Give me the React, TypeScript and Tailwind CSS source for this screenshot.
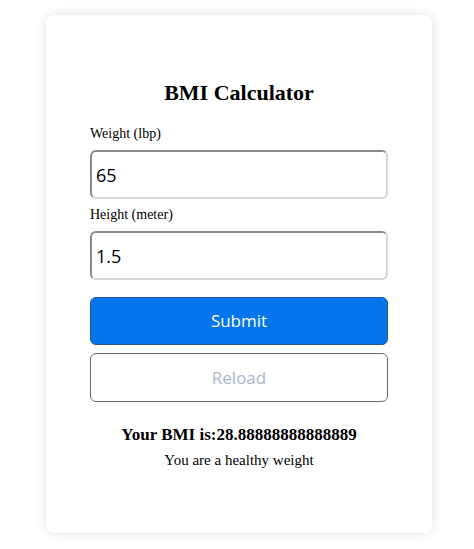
import { useState } from 'react';

const inputClass =
  "mt-[9px] h-[49px] w-full rounded-md border-2 border-t-[#8a8a8a] border-l-[#8a8a8a] border-r-[#d6d6d6] border-b-[#d6d6d6] bg-white pl-[4px] text-[18px] text-black outline-none font-['Open_Sans','DejaVu_Sans',sans-serif]";

export default function App() {
  const [weight, setWeight] = useState('65');
  const [height, setHeight] = useState('1.5');
  const [bmi, setBmi] = useState<number | null>(65 / (1.5 * 1.5));

  const handleSubmit = (e: React.FormEvent) => {
    e.preventDefault();
    const w = parseFloat(weight);
    const h = parseFloat(height);
    if (!w || !h) return;
    setBmi(w / (h * h));
  };

  return (
    <div className="min-h-[549px] w-[474px] bg-white pt-[15px] font-['Liberation_Serif','Times_New_Roman',serif]">
      <div className="ml-[46px] h-[518px] w-[386px] rounded-lg bg-white px-[44px] pt-[67px] shadow-[0_0_12px_rgba(0,0,0,0.12)]">
        <h1 className="text-center text-[22px] font-bold leading-none text-black">BMI Calculator</h1>
        <form onSubmit={handleSubmit} className="mt-[23px] flex flex-col">
          <label className="text-[14px] leading-none text-black">Weight (lbp)</label>
          <input value={weight} onChange={(e) => setWeight(e.target.value)} className={inputClass} />
          <label className="mt-[9px] text-[14px] leading-none text-black">Height (meter)</label>
          <input value={height} onChange={(e) => setHeight(e.target.value)} className={inputClass} />
          <button
            type="submit"
            className="mt-[17px] h-[48px] w-full rounded-md border border-[#2b5a8f] bg-[#0475eb] text-[17px] text-white font-['Open_Sans','DejaVu_Sans',sans-serif]"
          >
            Submit
          </button>
          <button
            type="button"
            onClick={() => setBmi(null)}
            className="mt-[8px] h-[49px] w-full rounded-md border border-[#6b6b6b] bg-white text-[17px] text-[#a9b6cc] font-['Open_Sans','DejaVu_Sans',sans-serif]"
          >
            Reload
          </button>
        </form>
        {bmi !== null && (
          <div className="mt-[24px] text-center text-black">
            <p className="text-[17px] font-bold leading-none">Your BMI is:{bmi}</p>
            <p className="mt-[10px] text-[15px] leading-none">You are a healthy weight</p>
          </div>
        )}
      </div>
    </div>
  );
}
